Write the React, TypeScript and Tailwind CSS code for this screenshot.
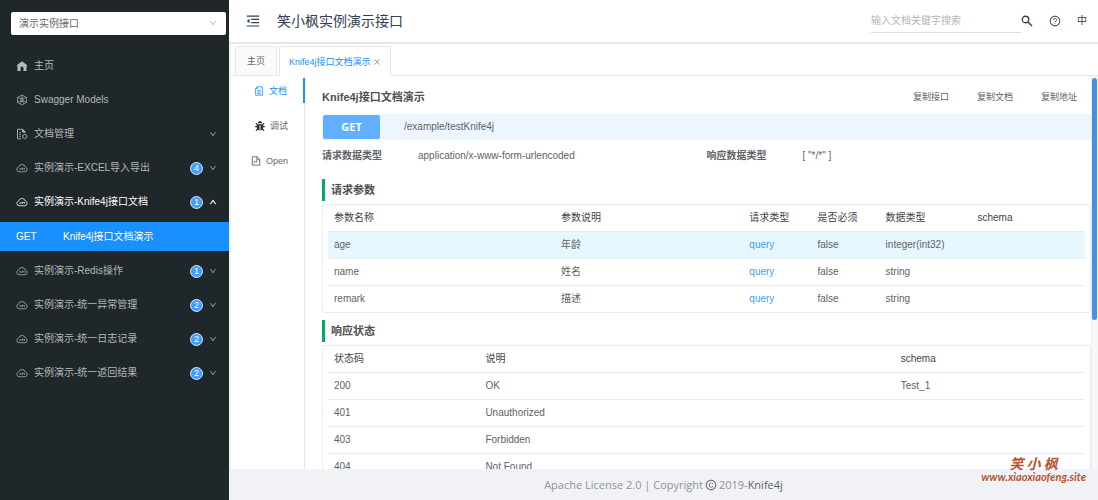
import type { ReactNode } from "react";
import {
	AiOutlineClose,
	AiOutlineCopyright,
	AiOutlineDown,
	AiOutlineMenuFold,
	AiOutlineQuestionCircle,
	AiOutlineUp,
} from "react-icons/ai";
import { FaBug } from "react-icons/fa";

type MenuItem = {
	label: string;
	icon: ReactNode;
	count?: number;
	expandable?: boolean;
	children?: { method: string; label: string }[];
};

function HomeIcon() {
	return (
		<svg viewBox="0 0 24 24" className="size-3" fill="currentColor">
			<path d="M12 2.5 22 10v2.5h-1V22h-6v-6a3 3 0 0 0-6 0v6H3v-9.500H2V10z" />
		</svg>
	);
}

function CloudIcon() {
	return (
		<svg viewBox="0 0 24 24" className="size-3" fill="none" stroke="currentColor" strokeWidth="1.5">
			<path d="M6 19.5a4.8 4.8 0 0 1-.8-9.4 7 7 0 0 1 13.5 0 4.8 4.8 0 0 1-.7 9.4z" />
			<path d="M7.5 15.8 9 12l1.5 3.8M12.5 15.8V12h2v2h-2M17 12v3.8" strokeWidth="1.2" />
		</svg>
	);
}

function ModelsIcon() {
	return (
		<svg viewBox="0 0 24 24" className="size-3" fill="none" stroke="currentColor" strokeWidth="1.4">
			<path d="M12 2 21 7v10l-9 5-9-5V7z" />
			<path d="M12 2v7M3 17l7-4M21 17l-7-4M3 7l9 2.5L21 7M8 19.500l4-6.500 4 6.500" />
			<circle cx="12" cy="12" r="2.5" />
		</svg>
	);
}

function DocSettingIcon() {
	return (
		<svg viewBox="0 0 24 24" className="size-3" fill="none" stroke="currentColor" strokeWidth="1.8">
			<path d="M10 21.5H3v-19h10l5 5V10" />
			<path d="M13 2.5V8h5z" fill="currentColor" />
			<path d="M6.500 9H10M6.500 13H10M6.500 17H9" />
			<path d="m17.5 12.5 4 2.3v4.4l-4 2.3-4-2.3v-4.4z" />
		</svg>
	);
}

function DocIcon() {
	return (
		<svg viewBox="0 0 24 24" className="size-2.5" fill="none" stroke="currentColor" strokeWidth="2">
			<path d="M8 2h12v20H4V6zM8 2v4H4M8 10h8M8 14h8M8 18h8" />
		</svg>
	);
}

function OpenIcon() {
	return (
		<svg viewBox="0 0 24 24" className="size-2.5" fill="none" stroke="currentColor" strokeWidth="2.2">
			<path d="M3 2h12l6 6v14H3zM14 2v7h7" />
			<path d="M8 18v-5h6M12 10.500l3 2.500-3 2.500" strokeWidth="1.800" />
		</svg>
	);
}

function SearchIcon() {
	return (
		<svg viewBox="0 0 24 24" className="size-3" fill="none" stroke="currentColor" strokeWidth="2.6">
			<circle cx="9" cy="9" r="6.5" />
			<path d="m14 14 8 8" strokeWidth="3" />
		</svg>
	);
}

const menu: MenuItem[] = [
	{ label: "主页", icon: <HomeIcon /> },
	{ label: "Swagger Models", icon: <ModelsIcon /> },
	{ label: "文档管理", icon: <DocSettingIcon />, expandable: true },
	{ label: "实例演示-EXCEL导入导出", icon: <CloudIcon />, count: 4, expandable: true },
	{
		label: "实例演示-Knife4j接口文档",
		icon: <CloudIcon />,
		count: 1,
		expandable: true,
		children: [{ method: "GET", label: "Knife4j接口文档演示" }],
	},
	{ label: "实例演示-Redis操作", icon: <CloudIcon />, count: 1, expandable: true },
	{ label: "实例演示-统一异常管理", icon: <CloudIcon />, count: 2, expandable: true },
	{ label: "实例演示-统一日志记录", icon: <CloudIcon />, count: 2, expandable: true },
	{ label: "实例演示-统一返回结果", icon: <CloudIcon />, count: 2, expandable: true },
];

const params = [
	{ name: "age", desc: "年龄", type: "integer(int32)" },
	{ name: "name", desc: "姓名", type: "string" },
	{ name: "remark", desc: "描述", type: "string" },
];

const statuses = [
	{ code: "200", desc: "OK", schema: "Test_1" },
	{ code: "401", desc: "Unauthorized", schema: "" },
	{ code: "403", desc: "Forbidden", schema: "" },
	{ code: "404", desc: "Not Found", schema: "" },
];

function Sidebar() {
	return (
		<aside className="w-[229px] shrink-0 bg-[#1f272b] text-[#b4b7b9]">
			<div className="relative pt-3 pl-[11px] pr-[3px]">
				<select
					aria-label="接口分组"
					className="block h-[23px] w-full appearance-none rounded-xs bg-white px-2 text-[10px] text-[#666]"
				>
					<option>演示实例接口</option>
				</select>
				<AiOutlineDown className="pointer-events-none absolute top-[19px] right-3 size-2 text-[#aaa]" />
			</div>

			<nav className="pt-3.5">
				{menu.map((item) => (
					<div key={item.label}>
						<a
							href="#"
							className={`flex h-[34px] items-center gap-1.5 pl-4 pr-3 ${
								item.children ? "text-white" : ""
							}`}
						>
							{item.icon}
							<span className="flex-1 whitespace-nowrap">{item.label}</span>
							{item.count && (
								<span className="flex size-[13px] items-center justify-center rounded-full border border-[#dbe9fa] bg-[#409eff] text-[9px] text-white">
									{item.count}
								</span>
							)}
							{item.expandable &&
								(item.children ? (
									<AiOutlineUp className="size-2 stroke-[60]" />
								) : (
									<AiOutlineDown className="size-2" />
								))}
						</a>
						{item.children?.map((child) => (
							<a
								key={child.label}
								href="#"
								className="my-[3px] flex h-[29px] items-center bg-[#1890ff] pl-4 text-white"
							>
								<span className="w-[47px]">{child.method}</span>
								<span>{child.label}</span>
							</a>
						))}
					</div>
				))}
			</nav>
		</aside>
	);
}

function Header() {
	return (
		<header className="flex h-11 shrink-0 items-center border-b-2 border-[#e4e6ea] bg-white pl-4 pr-[11px] text-[#34404f]">
			<button type="button" aria-label="收起菜单">
				<AiOutlineMenuFold className="size-4" />
			</button>
			<h1 className="ml-4 flex-1 text-sm">笑小枫实例演示接口</h1>
			<input
				type="text"
				aria-label="搜索"
				placeholder="输入文档关键字搜索"
				className="h-6 w-[150px] border-b border-[#dcdee2] text-[10px] outline-none placeholder:text-[#b5b5b5]"
			/>
			<button type="button" aria-label="搜索文档">
				<SearchIcon />
			</button>
			<a href="#" aria-label="帮助" className="ml-4">
				<AiOutlineQuestionCircle className="size-3" />
			</a>
			<button type="button" className="ml-4">
				中
			</button>
		</header>
	);
}

function PageTabs() {
	return (
		<div className="flex h-8 shrink-0 items-end gap-0.5 border-b border-[#e8e8e8] pl-1 text-[9px]">
			<button
				type="button"
				className="h-[29px] rounded-t-xs border border-b-0 border-[#e8e8e8] bg-[#fafafa] px-[11px] text-[#666]"
			>
				主页
			</button>
			<button
				type="button"
				className="-mb-px flex h-[30px] items-center gap-0.5 rounded-t-xs border border-b-0 border-[#e8e8e8] bg-white px-[9px] text-[#1890ff]"
			>
				Knife4j接口文档演示
				<AiOutlineClose className="size-2 text-[#888]" />
			</button>
		</div>
	);
}

function SideTabs() {
	const base = "flex h-[25px] items-center justify-end gap-[5px] pr-4";
	return (
		<div className="flex w-[74px] shrink-0 flex-col gap-2.5 border-r border-[#e8e8e8] pt-0.5 text-[9px] text-[#666]">
			<button type="button" className={`${base} -mr-px border-r-2 border-[#1890ff] text-[#1890ff]`}>
				<DocIcon />
				文档
			</button>
			<button type="button" className={base}>
				<FaBug className="size-2.5 text-[#333]" />
				调试
			</button>
			<button type="button" className={base}>
				<OpenIcon />
				Open
			</button>
		</div>
	);
}

function SectionTitle({ children }: { children: ReactNode }) {
	return (
		<h3 className="mb-[3px] flex h-[22px] items-center border-l-3 border-[#00ab6d] pl-1.5 text-[11px] font-bold text-[#505050]">
			{children}
		</h3>
	);
}

function ParamTable() {
	return (
		<table className="w-full table-fixed text-left">
			<thead className="text-[#444]">
				<tr className="h-[26px] border-b border-[#ebeef0]">
					<th className="w-[30%] pl-1.5 font-normal">参数名称</th>
					<th className="w-[25%] pl-1.5 font-normal">参数说明</th>
					<th className="w-[9%] pl-[5px] font-normal">请求类型</th>
					<th className="w-[9%] pl-[5px] font-normal">是否必须</th>
					<th className="w-[12%] pl-[5px] font-normal">数据类型</th>
					<th className="pl-1.5 font-normal">schema</th>
				</tr>
			</thead>
			<tbody>
				{params.map((p, index) => (
					<tr
						key={p.name}
						className={`h-[27px] border-b border-[#ebeef0] last:border-b-0 ${
							index === 0 ? "bg-[#e6f7ff]" : ""
						}`}
					>
						<td className="pl-1.5">{p.name}</td>
						<td className="pl-1.5">{p.desc}</td>
						<td className="pl-[5px] text-[#409eff]">query</td>
						<td className="pl-[5px]">false</td>
						<td className="pl-[5px]">{p.type}</td>
						<td />
					</tr>
				))}
			</tbody>
		</table>
	);
}

function StatusTable() {
	return (
		<table className="w-full table-fixed text-left">
			<thead className="text-[#444]">
				<tr className="h-[26px] border-b border-[#ebeef0]">
					<th className="w-[20%] pl-1.5 font-normal">状态码</th>
					<th className="w-[55%] pl-1.5 font-normal">说明</th>
					<th className="pl-[5px] font-normal">schema</th>
				</tr>
			</thead>
			<tbody>
				{statuses.map((s) => (
					<tr key={s.code} className="h-[27px] border-b border-[#ebeef0]">
						<td className="pl-1.5">{s.code}</td>
						<td className="pl-1.5">{s.desc}</td>
						<td className="pl-[5px]">{s.schema}</td>
					</tr>
				))}
			</tbody>
		</table>
	);
}

function ApiDoc() {
	return (
		<div className="min-w-0 flex-1 overflow-hidden pl-[17px]">
			{/* Title + copy actions */}
			<div className="flex h-[38px] items-center pt-1 pr-3.5">
				<h2 className="flex-1 text-[11px] font-bold text-[#505050]">Knife4j接口文档演示</h2>
				<div className="flex gap-7 text-[9px]">
					<button type="button">复制接口</button>
					<button type="button">复制文档</button>
					<button type="button">复制地址</button>
				</div>
			</div>

			{/* Method + path */}
			<div className="flex h-[26px] items-center bg-[#edf6ff] pl-px">
				<span className="flex h-6 w-[57px] items-center justify-center rounded-xs bg-[#61affe] font-['Open_Sans'] text-[11px] font-bold text-white">
					GET
				</span>
				<span className="ml-6">/example/testKnife4j</span>
			</div>

			<dl className="grid h-8 grid-cols-2 items-center">
				<div className="flex">
					<dt className="w-24 font-bold">请求数据类型</dt>
					<dd>application/x-www-form-urlencoded</dd>
				</div>
				<div className="flex">
					<dt className="w-24 font-bold">响应数据类型</dt>
					<dd>[ "*/*" ]</dd>
				</div>
			</dl>

			<section className="mt-[7px]">
				<SectionTitle>请求参数</SectionTitle>
				<div className="rounded-xs border border-[#ebeef0] px-[5px]">
					<ParamTable />
				</div>
			</section>

			<section className="mt-[7px]">
				<SectionTitle>响应状态</SectionTitle>
				<div className="rounded-xs border border-[#ebeef0] px-[5px]">
					<StatusTable />
				</div>
			</section>
		</div>
	);
}

export default function App() {
	return (
		<div className="flex h-screen overflow-hidden bg-[#f0f2f5] font-['Liberation_Sans','Noto_Sans_CJK_SC',sans-serif] text-[10px] leading-4 text-[#606266]">
			<Sidebar />
			<div className="flex min-w-0 flex-1 flex-col">
				<Header />
				<main className="ml-0.5 flex min-h-0 flex-1 flex-col bg-white">
					<PageTabs />
					<div className="flex min-h-0 flex-1">
						<SideTabs />
						<ApiDoc />
						<div className="w-[7px] shrink-0 border-l border-[#ececec] bg-[#f7f7f7] pt-0.5">
							<div className="h-[62%] w-[5px] rounded-full bg-[#4191e5]" />
						</div>
					</div>
				</main>
				<footer className="relative flex h-[31px] shrink-0 items-center justify-center font-['Open_Sans','Noto_Sans_CJK_SC',sans-serif] text-[11px] text-[#909399]">
					<span>Apache License 2.0 | Copyright</span>
					<AiOutlineCopyright className="mx-0.5 size-3 text-[#606266]" />
					<span>
						2019-
						<a href="#" className="text-[#606266]">
							Knife4j
						</a>
					</span>
					{/* Site watermark */}
					<div className="absolute right-3 bottom-4 text-center font-['Lato','Noto_Sans_CJK_SC',sans-serif] text-[11px] leading-3.5 font-bold text-[#b5532f] italic">
						<div className="text-sm leading-3">笑 小 枫</div>
						<div>www.xiaoxiaofeng.site</div>
					</div>
				</footer>
			</div>
		</div>
	);
}
